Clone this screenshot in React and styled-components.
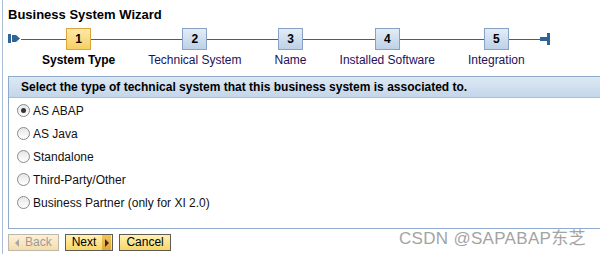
import styled, { createGlobalStyle } from "styled-components";

const GlobalStyle = createGlobalStyle`
  html, body {
    margin: 0;
    padding: 0;
    background: #ffffff;
    overflow: hidden;
  }
  body {
    font-family: "Liberation Sans", Arial, sans-serif;
    font-size: 12px;
    color: #000;
  }
`;

const steps = [
  { no: 1, label: "System Type" },
  { no: 2, label: "Technical System" },
  { no: 3, label: "Name" },
  { no: 4, label: "Installed Software" },
  { no: 5, label: "Integration" },
];

const options = [
  "AS ABAP",
  "AS Java",
  "Standalone",
  "Third-Party/Other",
  "Business Partner (only for XI 2.0)",
];

const App = () => {
  return (
    <>
      <GlobalStyle />
      <Page>
        <Title>Business System Wizard</Title>
        <Roadmap>
          <StartMark>
            <svg width="13" height="12" viewBox="0 0 13 12">
              <rect x="0" y="1" width="3" height="9" fill="#2f6496" />
              <polygon points="4,2 8,2 12,5.5 8,9 4,9" fill="#2f6496" />
            </svg>
          </StartMark>
          <Steps>
            {steps.map((s) => (
              <Step key={s.no}>
                <StepBox $active={s.no === 1}>{s.no}</StepBox>
                <StepLabel $active={s.no === 1}>{s.label}</StepLabel>
              </Step>
            ))}
          </Steps>
          <EndMark>
            <svg width="10" height="12" viewBox="0 0 10 12">
              <rect x="0" y="4" width="8" height="4" fill="#2f6496" />
              <rect x="7" y="0" width="3" height="12" fill="#2f6496" />
            </svg>
          </EndMark>
        </Roadmap>

        <Panel>
          <PanelHeader>
            Select the type of technical system that this business system is
            associated to.
          </PanelHeader>
          <Options>
            {options.map((o, i) => (
              <Option key={o}>
                <Radio $checked={i === 0} />
                <span>{o}</span>
              </Option>
            ))}
          </Options>
        </Panel>

        <Buttons>
          <Button $disabled>
            <Arrow $left $disabled />
            Back
          </Button>
          <Button>
            Next
            <ArrowCell>
              <Arrow />
            </ArrowCell>
          </Button>
          <Button>Cancel</Button>
        </Buttons>

        <Watermark>CSDN @SAPABAP东芝</Watermark>
      </Page>
    </>
  );
};

export default App;

// Styled components
const Page = styled.div`
  position: relative;
  margin-left: 2px;
  border-left: 1px solid #a9bdd6;
  padding: 7px 0 0 5px;
  height: 254px;
  box-sizing: border-box;
`;

const Title = styled.div`
  font-size: 13px;
  font-weight: bold;
  line-height: 16px;
  color: #000;
`;

const Roadmap = styled.div`
  display: flex;
  align-items: flex-start;
  width: 542px;
  margin-top: 5px;
  height: 45px;
  background: linear-gradient(#2f6496, #2f6496) no-repeat;
  background-size: 100% 1px;
  background-position: 0 11px;
`;

const StartMark = styled.div`
  display: flex;
  padding-top: 5px;
  background: #fff;
  line-height: 0;
`;

const EndMark = styled.div`
  display: flex;
  margin-left: auto;
  padding-top: 5px;
  line-height: 0;
`;

const Steps = styled.div`
  display: flex;
  gap: 33px;
  margin-left: 21px;
`;

const Step = styled.div`
  display: flex;
  flex-direction: column;
  align-items: center;
`;

const StepBox = styled.div`
  width: 23px;
  height: 20px;
  display: flex;
  align-items: center;
  justify-content: center;
  font-size: 12px;
  font-weight: bold;
  color: #000;
  border: 1px solid ${(p) => (p.$active ? "#d9a53c" : "#86a3c6")};
  background: ${(p) =>
    p.$active
      ? "linear-gradient(#fde9a8, #f7cf63)"
      : "linear-gradient(#e3ecf6, #bdd1e8)"};
`;

const StepLabel = styled.div`
  margin-top: 2px;
  white-space: nowrap;
  line-height: 16px;
  font-size: 12px;
  font-weight: ${(p) => (p.$active ? "bold" : "normal")};
  color: ${(p) => (p.$active ? "#000" : "#23105a")};
`;

const Panel = styled.div`
  margin-top: 3px;
  border: 1px solid #8eaacd;
  border-right: none;
`;

const PanelHeader = styled.div`
  height: 20px;
  line-height: 20px;
  padding-left: 12px;
  font-weight: bold;
  white-space: nowrap;
  color: #000;
  border-bottom: 1px solid #a9bfd9;
  background: linear-gradient(#dde8f4, #c4d6ea);
`;

const Options = styled.div`
  display: flex;
  flex-direction: column;
  padding: 1px 0 14px 8px;
`;

const Option = styled.label`
  display: flex;
  align-items: center;
  gap: 3px;
  height: 23px;
  color: #111;
`;

const Radio = styled.span`
  position: relative;
  width: 11px;
  height: 11px;
  border: 1px solid #8a8a8a;
  border-radius: 50%;
  background: linear-gradient(#e6e6e6, #ffffff);
  flex-shrink: 0;

  &::after {
    content: "";
    display: ${(p) => (p.$checked ? "block" : "none")};
    position: absolute;
    left: 3px;
    top: 3px;
    width: 5px;
    height: 5px;
    border-radius: 50%;
    background: #333;
  }
`;

const Buttons = styled.div`
  display: flex;
  gap: 6px;
  margin-top: 5px;
`;

const Button = styled.button`
  display: flex;
  align-items: center;
  gap: 6px;
  height: 17px;
  padding: 0 6px;
  font-family: "Liberation Sans", Arial, sans-serif;
  font-size: 12px;
  line-height: 15px;
  color: ${(p) => (p.$disabled ? "#9a9a9a" : "#000")};
  border: 1px solid ${(p) => (p.$disabled ? "#bdb8ac" : "#5f5c55")};
  background: ${(p) =>
    p.$disabled
      ? "linear-gradient(#fdf1d8, #f6dcaa)"
      : "linear-gradient(#fff2b8, #f8d564)"};
  cursor: pointer;
`;

const ArrowCell = styled.span`
  display: flex;
  align-items: center;
  justify-content: center;
  width: 9px;
  height: 15px;
  margin-right: -5px;
  background: linear-gradient(#f2c45c, #e0a53a);
`;

const Arrow = styled.span`
  width: 0;
  height: 0;
  border-top: 4px solid transparent;
  border-bottom: 4px solid transparent;
  ${(p) =>
    p.$left
      ? `border-right: 4px solid ${p.$disabled ? "#a7a7a7" : "#3b3b3b"};`
      : `border-left: 4px solid #3b2f12;`}
`;

const Watermark = styled.div`
  position: absolute;
  left: 396px;
  top: 224px;
  font-size: 17px;
  letter-spacing: 0.3px;
  color: #9a9a9a;
  font-family: "Liberation Sans", "Noto Sans CJK SC", sans-serif;
  white-space: nowrap;
  opacity: 0.9;
`;
